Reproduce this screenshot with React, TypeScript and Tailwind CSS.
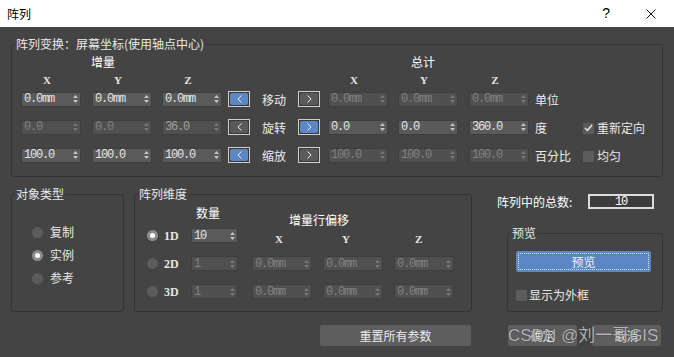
import React from "react";

const cjk = "font-['Noto_Sans_CJK_SC','Noto_Sans',sans-serif]";
const mono = "font-['Liberation_Mono',monospace]";
const xyz = "font-['Liberation_Serif',serif] font-bold text-[11px] leading-[12px] text-[#e6e6e6]";

function Spin({ dim }: { dim?: boolean }) {
  return (
    <svg width="5" height="8" viewBox="0 0 5 8" className={dim ? "text-[#787878]" : "text-[#c4c4c4]"}>
      <path d="M2.5 0 5 3H0z M2.5 8 5 5H0z" fill="currentColor" />
    </svg>
  );
}

function Field({ v, w = "w-[60px]", dim, light }: { v: string; w?: string; dim?: boolean; light?: boolean }) {
  const tone = dim ? (light ? "bg-[#505050] text-[#a0a0a0]" : "bg-[#505050] text-[#828282]") : "bg-[#5a5a5a] text-[#e6e6e6]";
  return (
    <div className={`${w} h-[15px] flex items-center justify-between pl-[2px] pr-[2px] border border-[#3e3e3e] ${tone}`}>
      <span className={`${mono} text-[12px] tracking-[-1.2px] leading-none`}>{v}</span>
      <Spin dim={dim} />
    </div>
  );
}

function ArrowBtn({ dir, on }: { dir: "l" | "r"; on?: boolean }) {
  return (
    <div className="w-[22px] h-[16px] border border-[#cfcfcf] p-[1px] bg-[#3a3a3a]">
      <div className={`w-full h-full rounded-[2px] flex items-center justify-center ${on ? "bg-[#5b87c5]" : "bg-[#5a5a5a]"}`}>
        <svg width="5" height="8" viewBox="0 0 5 8">
          <path d={dir === "l" ? "M4.5 0.5 1 4l3.5 3.5" : "M0.5 0.5 4 4 0.5 7.5"} stroke="#ececec" fill="none" strokeWidth="1" />
        </svg>
      </div>
    </div>
  );
}

function Radio({ on }: { on?: boolean }) {
  return on ? (
    <span className="w-[11px] h-[11px] rounded-full bg-[#8c8c8c] flex items-center justify-center shrink-0">
      <span className="w-[5px] h-[5px] rounded-full bg-white" />
    </span>
  ) : (
    <span className="w-[11px] h-[11px] rounded-full bg-[#5c5c5c] shrink-0" />
  );
}

function Check({ on }: { on?: boolean }) {
  return (
    <span className="w-[11px] h-[11px] bg-[#5c5c5c] flex items-center justify-center shrink-0">
      {on && (
        <svg width="9" height="8" viewBox="0 0 9 8">
          <path d="M1 4l2.5 2.5L8 1" stroke="#e8e8e8" strokeWidth="1.5" fill="none" />
        </svg>
      )}
    </span>
  );
}

function Group({ label, className, children }: { label: string; className: string; children?: React.ReactNode }) {
  return (
    <div className={`relative border border-[#333333] rounded-[3px] ${className}`}>
      <span className={`absolute -top-[7px] left-[3px] px-[1px] bg-[#444444] text-[12px] leading-[12px] text-[#e8e8e8] ${cjk}`}>
        {label}
      </span>
      {children}
    </div>
  );
}

const rows = [
  { inc: ["0.0mm", "0.0mm", "0.0mm"], incDim: false, left: true, name: "移动", right: false, tot: ["0.0mm", "0.0mm", "0.0mm"], totDim: true, unit: "单位" },
  { inc: ["0.0", "0.0", "36.0"], incDim: true, left: false, name: "旋转", right: true, tot: ["0.0", "0.0", "360.0"], totDim: false, unit: "度" },
  { inc: ["100.0", "100.0", "100.0"], incDim: false, left: true, name: "缩放", right: false, tot: ["100.0", "100.0", "100.0"], totDim: true, unit: "百分比" },
];

export default function App() {
  return (
    <div className={`w-[674px] h-[357px] bg-[#444444] relative overflow-hidden text-[#e8e8e8] ${cjk}`}>
      {/* title bar */}
      <div className="h-[27px] bg-white flex items-center pl-[7px] text-black">
        <span className="text-[12px] leading-[12px]">阵列</span>
        <span className="ml-auto text-[14px] font-['Liberation_Sans',sans-serif]">?</span>
        <svg width="10" height="10" viewBox="0 0 10 10" className="ml-[36px] mr-[18px]">
          <path d="M0.5 0.5l9 9M9.5 0.5l-9 9" stroke="#111" strokeWidth="1" />
        </svg>
      </div>

      <div className="px-[11px] pt-[17px]">
        {/* 阵列变换 */}
        <Group label="阵列变换：屏幕坐标(使用轴点中心)" className="pl-[9px] pt-[11px] pb-[13px]">
          <div className="grid grid-cols-[71px_70px_66px_34px_36px_30px_70px_71px_66px_48px_auto] h-[12px] text-[12px] leading-[12px]">
            <span className="col-start-2 -ml-[1px] text-white">增量</span>
            <span className="col-start-8 ml-[13px] text-white">总计</span>
          </div>
          <div className="grid grid-cols-[71px_70px_66px_34px_36px_30px_70px_71px_66px_48px_auto] h-[12px] mt-[6px]">
            <span className={`w-[52px] text-center ${xyz}`}>X</span>
            <span className={`w-[52px] text-center ${xyz}`}>Y</span>
            <span className={`w-[52px] text-center ${xyz}`}>Z</span>
            <span />
            <span />
            <span />
            <span className={`w-[52px] text-center ${xyz}`}>X</span>
            <span className={`w-[52px] text-center ${xyz}`}>Y</span>
            <span className={`w-[52px] text-center ${xyz}`}>Z</span>
          </div>
          <div className="flex flex-col gap-[12px] mt-[5px]">
            {rows.map((r, i) => (
              <div key={i} className="grid grid-cols-[71px_70px_66px_34px_36px_30px_70px_71px_66px_48px_auto] h-[16px] items-center">
                {r.inc.map((v, j) => (
                  <Field key={j} v={v} dim={r.incDim} light={v === "36.0"} />
                ))}
                <ArrowBtn dir="l" on={r.left} />
                <span className="text-[12px] leading-[12px] text-[#ececec] pt-[2px]">{r.name}</span>
                <ArrowBtn dir="r" on={r.right} />
                {r.tot.map((v, j) => (
                  <Field key={j} v={v} dim={r.totDim} />
                ))}
                <span className="text-[12px] leading-[12px] text-[#ececec] pt-[2px]">{r.unit}</span>
                {i === 1 && (
                  <div className="flex items-center gap-[3px] pt-[2px]">
                    <Check on />
                    <span className="text-[12px] leading-[12px]">重新定向</span>
                  </div>
                )}
                {i === 2 && (
                  <div className="flex items-center gap-[3px] pt-[2px]">
                    <Check />
                    <span className="text-[12px] leading-[12px]">均匀</span>
                  </div>
                )}
              </div>
            ))}
          </div>
        </Group>

        {/* lower section */}
        <div className="flex mt-[17px]">
          <Group label="对象类型" className="w-[113px] h-[118px] pl-[20px] pt-[31px]">
            <div className="flex flex-col gap-[11px]">
              {[
                ["复制", false],
                ["实例", true],
                ["参考", false],
              ].map(([t, on]) => (
                <div key={t as string} className="flex items-center h-[12px] gap-[7px]">
                  <Radio on={on as boolean} />
                  <span className="text-[12px] leading-[12px]">{t as string}</span>
                </div>
              ))}
            </div>
          </Group>

          <Group label="阵列维度" className="ml-[10px] w-[338px] h-[118px] flex">
            <div className="w-[103px] pt-[12px]">
              <div className="pl-[61px] h-[12px] text-[12px] leading-[12px] text-white">数量</div>
              <div className="flex flex-col gap-[13px] mt-[9px]">
                {["1D", "2D", "3D"].map((d, i) => (
                  <div key={d} className="flex items-center h-[15px]">
                    <div className="w-[56px] flex items-center pl-[12px] gap-[6px]">
                      <Radio on={i === 0} />
                      <span className="font-['Liberation_Serif',serif] font-bold text-[12px] leading-[12px] text-[#e6e6e6]">{d}</span>
                    </div>
                    <Field v={i === 0 ? "10" : "1"} w="w-[47px]" dim={i !== 0} />
                  </div>
                ))}
              </div>
            </div>
            <div className="ml-[14px] pt-[19px]">
              <div className="pl-[37px] h-[12px] text-[12px] leading-[12px] text-white">增量行偏移</div>
              <div className="flex h-[12px] mt-[7px]">
                <span className={`ml-[23px] ${xyz}`}>X</span>
                <span className={`ml-[59px] ${xyz}`}>Y</span>
                <span className={`ml-[65px] ${xyz}`}>Z</span>
              </div>
              <div className="flex flex-col gap-[13px] mt-[11px]">
                {[0, 1].map((k) => (
                  <div key={k} className="flex gap-[11px] h-[15px]">
                    <Field v="0.0mm" dim />
                    <Field v="0.0mm" dim />
                    <Field v="0.0mm" dim />
                  </div>
                ))}
              </div>
            </div>
          </Group>

          <div className="flex-1 flex flex-col">
            <div className="flex items-center h-[15px]">
              <span className="ml-[25px] text-[12px] leading-[12px] text-white">阵列中的总数:</span>
              <div className="ml-auto mr-[9px] w-[66px] h-[15px] border-2 border-[#dcdcdc] bg-[#3c3c3c] flex items-center justify-center">
                <span className={`${mono} text-[12px] tracking-[-1.2px] leading-none text-white`}>10</span>
              </div>
            </div>
            <Group label="预览" className="ml-[35px] mt-[24px] h-[79px] pl-[8px] pt-[17px]">
              <div className="w-[135px] h-[21px] bg-[#5b87c4] rounded-[2px] p-[2px]">
                <div className="w-full h-full border border-dotted border-[#d8e4f4] flex items-center justify-center text-[12px] leading-[12px] text-[#eef2f8]">
                  预览
                </div>
              </div>
              <div className="flex items-center gap-[2px] mt-[17px]">
                <Check />
                <span className="text-[12px] leading-[12px]">显示为外框</span>
              </div>
            </Group>
          </div>
        </div>

        {/* buttons */}
        <div className="flex mt-[13px] h-[21px]">
          <button className="ml-[309px] w-[151px] h-[21px] bg-[#5e5e5e] rounded-[2px] text-[12px] leading-[12px] text-[#ececec]">
            重置所有参数
          </button>
          <button className="ml-[37px] w-[69px] h-[21px] bg-[#5e5e5e] rounded-[2px] text-[12px] leading-[12px] text-[#ececec]">
            确定
          </button>
          <button className="ml-[15px] w-[69px] h-[21px] bg-[#5e5e5e] rounded-[2px] text-[12px] leading-[12px] text-[#ececec]">
            取消
          </button>
        </div>
      </div>

      {/* watermark */}
      <span className="absolute left-[508px] top-[326px] text-[17px] leading-[20px] text-[#cfcfcf]/85 font-['Liberation_Sans','Noto_Sans_CJK_SC',sans-serif] [text-shadow:0_0_1px_#222]">
        CSDN @刘一哥GIS
      </span>
    </div>
  );
}
